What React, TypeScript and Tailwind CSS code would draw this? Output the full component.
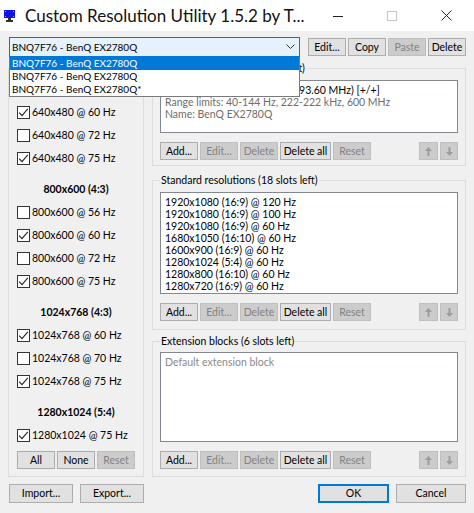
import React from 'react';

type BtnProps = { label: string; w: string; disabled?: boolean; primary?: boolean; h?: string };

const Btn: React.FC<BtnProps> = ({ label, w, disabled, primary, h = 'h-[18px]' }) => (
  <button
    className={`${w} ${h} shrink-0 flex items-center justify-center text-[10.5px] leading-none ${
      disabled
        ? 'bg-[#cccccc] border border-[#bfbfbf] text-[#838383]'
        : primary
        ? 'bg-[#e1e1e1] border-2 border-[#0078d7] text-black'
        : 'bg-[#e1e1e1] border border-[#adadad] text-black'
    }`}
  >
    {label}
  </button>
);

const ArrowBtn: React.FC<{ dir: 'up' | 'down'; w: string }> = ({ dir, w }) => (
  <button className={`${w} h-[18px] shrink-0 flex items-center justify-center border border-[#bfbfbf] bg-[#cccccc]`}>
    <svg width="7" height="9" viewBox="0 0 7 9">
      {dir === 'up' ? (
        <path d="M3.5 0 L7 4 H4.5 V9 H2.5 V4 H0 Z" fill="#9c9c9c" />
      ) : (
        <path d="M3.5 9 L7 5 H4.5 V0 H2.5 V5 H0 Z" fill="#9c9c9c" />
      )}
    </svg>
  </button>
);

const ListButtons = () => (
  <div className="mt-[9px] flex gap-[2px]">
    <Btn label="Add..." w="w-[38px]" />
    <Btn label="Edit..." w="w-[38px]" disabled />
    <Btn label="Delete" w="w-[38px]" disabled />
    <Btn label="Delete all" w="w-[51px]" />
    <Btn label="Reset" w="w-[38px]" disabled />
    <div className="flex-1" />
    <ArrowBtn dir="up" w="w-[19px]" />
    <ArrowBtn dir="down" w="w-[18px]" />
  </div>
);

const Check: React.FC<{ label: string; checked?: boolean }> = ({ label, checked }) => (
  <div className="h-[23px] flex items-center pl-[8px]">
    <span className="w-[13px] h-[13px] shrink-0 border border-[#333333] bg-white flex items-center justify-center">
      {checked && (
        <svg width="11" height="11" viewBox="0 0 11 11">
          <path d="M1.2 5.6 L4 8.6 L9.8 1.8" fill="none" stroke="#222" strokeWidth="1.1" />
        </svg>
      )}
    </span>
    <span className="ml-[2px] whitespace-nowrap">{label}</span>
  </div>
);

const Header: React.FC<{ label: string; first?: boolean }> = ({ label, first }) => (
  <div className={`h-[23px] flex items-center justify-center font-bold ${first ? '' : 'mt-[8px]'}`}>{label}</div>
);

const App: React.FC = () => {
  const standard = [
    '1920x1080 (16:9) @ 120 Hz',
    '1920x1080 (16:9) @ 100 Hz',
    '1920x1080 (16:9) @ 60 Hz',
    '1680x1050 (16:10) @ 60 Hz',
    '1600x900 (16:9) @ 60 Hz',
    '1280x1024 (5:4) @ 60 Hz',
    '1280x800 (16:10) @ 60 Hz',
    '1280x720 (16:9) @ 60 Hz',
  ];

  return (
    <div className="w-[474px] h-[513px] bg-[#f0f0f0] overflow-hidden text-[10.5px] text-black font-['Lato','Liberation_Sans',sans-serif]">
      {/* Title bar */}
      <div className="h-[31px] bg-white flex items-center">
        <svg className="ml-[4px] shrink-0" width="11" height="12" viewBox="0 0 11 12">
          <rect x="0" y="0" width="11" height="8" fill="#1010e8" />
          <rect x="1" y="1" width="1" height="1" fill="#9fb4ff" />
          <rect x="9" y="1" width="1" height="1" fill="#9fb4ff" />
          <rect x="1" y="6" width="1" height="1" fill="#9fb4ff" />
          <rect x="9" y="6" width="1" height="1" fill="#9fb4ff" />
          <rect x="4" y="8" width="3" height="2" fill="#333" />
          <rect x="2" y="10" width="7" height="2" fill="#333" />
        </svg>
        <span className="ml-[10px] text-[17px] text-[#111] whitespace-nowrap">Custom Resolution Utility 1.5.2 by T...</span>
        <div className="ml-auto flex pr-[1px]">
          <div className="w-[54px] h-[31px] flex items-center justify-center">
            <svg width="10" height="10" viewBox="0 0 10 10">
              <path d="M0 5.5 H10" stroke="#222" strokeWidth="1" />
            </svg>
          </div>
          <div className="w-[54px] h-[31px] flex items-center justify-center">
            <svg width="10" height="10" viewBox="0 0 10 10">
              <rect x="0.5" y="0.5" width="9" height="9" fill="none" stroke="#c4c4c4" strokeWidth="1" />
            </svg>
          </div>
          <div className="w-[54px] h-[31px] flex items-center justify-center">
            <svg width="11" height="11" viewBox="0 0 11 11">
              <path d="M0.5 0.5 L10.5 10.5 M10.5 0.5 L0.5 10.5" stroke="#222" strokeWidth="1" />
            </svg>
          </div>
        </div>
      </div>

      <div className="px-[8px] pt-[6px]">
        {/* Display selector row */}
        <div className="h-[20px] flex items-center">
          <div className="relative ml-[1px] w-[291px] h-[20px] shrink-0 text-[10px]">
            <div className="h-full border border-[#0078d7] bg-[#e5f1fb] flex items-center pl-[2px] pr-[4px]">
              <span className="whitespace-nowrap">BNQ7F76 - BenQ EX2780Q</span>
              <svg className="ml-auto" width="9" height="6" viewBox="0 0 9 6">
                <path d="M0.5 0.5 L4.5 4.5 L8.5 0.5" fill="none" stroke="#333" strokeWidth="1" />
              </svg>
            </div>
            <div className="absolute left-0 top-full w-full z-10 bg-white border-x border-b border-[#7a7a7a]">
              <div className="h-[13px] leading-[13px] pl-[2px] bg-[#0078d7] text-white">BNQ7F76 - BenQ EX2780Q</div>
              <div className="h-[13px] leading-[13px] pl-[2px]">BNQ7F76 - BenQ EX2780Q</div>
              <div className="h-[13px] leading-[13px] pl-[2px]">BNQ7F76 - BenQ EX2780Q*</div>
            </div>
          </div>
          <div className="ml-auto flex gap-[2px]">
            <Btn label="Edit..." w="w-[38px]" />
            <Btn label="Copy" w="w-[38px]" />
            <Btn label="Paste" w="w-[38px]" disabled />
            <Btn label="Delete" w="w-[38px]" />
          </div>
        </div>

        {/* Main area */}
        <div className="mt-[5px] flex gap-[8px]">
          <fieldset className="w-[136px] h-[415px] shrink-0 border border-[#dcdcdc] px-0">
            <legend className="ml-[7px] px-[1px] leading-[13px]">Established resolutions</legend>
            <div className="pt-[3px]">
              <Header label="640x480 (4:3)" first />
              <Check label="640x480 @ 60 Hz" checked />
              <Check label="640x480 @ 72 Hz" />
              <Check label="640x480 @ 75 Hz" checked />
              <Header label="800x600 (4:3)" />
              <Check label="800x600 @ 56 Hz" />
              <Check label="800x600 @ 60 Hz" checked />
              <Check label="800x600 @ 72 Hz" />
              <Check label="800x600 @ 75 Hz" checked />
              <Header label="1024x768 (4:3)" />
              <Check label="1024x768 @ 60 Hz" checked />
              <Check label="1024x768 @ 70 Hz" />
              <Check label="1024x768 @ 75 Hz" checked />
              <Header label="1280x1024 (5:4)" />
              <Check label="1280x1024 @ 75 Hz" checked />
              <div className="mt-[4px] pl-[8px] flex gap-[2px]">
                <Btn label="All" w="w-[38px]" />
                <Btn label="None" w="w-[38px]" />
                <Btn label="Reset" w="w-[38px]" disabled />
              </div>
            </div>
          </fieldset>

          <div className="w-[314px] flex flex-col">
            <fieldset className="h-[104px] border border-[#dcdcdc] px-[7px]">
              <legend className="px-[1px] leading-[13px]">Detailed resolutions (1 slot left)</legend>
              <div className="mt-[5px] h-[53px] bg-white border border-[#828790] pt-[3px] px-[4px] leading-[12px] whitespace-nowrap overflow-hidden">
                <div>2560x1440 @ 143.998 Hz (593.60 MHz) [+/+]</div>
                <div className="text-[#6d6d6d]">Range limits: 40-144 Hz, 222-222 kHz, 600 MHz</div>
                <div className="text-[#6d6d6d]">Name: BenQ EX2780Q</div>
              </div>
              <ListButtons />
            </fieldset>

            <fieldset className="mt-[8px] h-[156px] border border-[#dcdcdc] px-[7px]">
              <legend className="px-[1px] leading-[13px]">Standard resolutions (18 slots left)</legend>
              <div className="mt-[5px] h-[102px] bg-white border border-[#828790] pt-[3px] px-[4px] leading-[12px] whitespace-nowrap overflow-hidden">
                {standard.map((s) => (
                  <div key={s}>{s}</div>
                ))}
              </div>
              <ListButtons />
            </fieldset>

            <fieldset className="mt-[5px] h-[142px] border border-[#dcdcdc] px-[7px]">
              <legend className="px-[1px] leading-[13px]">Extension blocks (6 slots left)</legend>
              <div className="mt-[4px] h-[90px] bg-white border border-[#828790] pt-[3px] px-[4px] leading-[12px] whitespace-nowrap overflow-hidden">
                <div className="text-[#8a8a8a]">Default extension block</div>
              </div>
              <ListButtons />
            </fieldset>
          </div>
        </div>

        {/* Bottom buttons */}
        <div className="mt-[7px] h-[19px] flex">
          <Btn label="Import..." w="w-[64px]" h="h-[19px] ml-[1px]" />
          <Btn label="Export..." w="w-[64px]" h="h-[19px] ml-[7px]" />
          <div className="flex-1" />
          <Btn label="OK" w="w-[71px]" h="h-[19px]" primary />
          <Btn label="Cancel" w="w-[70px]" h="h-[19px] ml-[7px]" />
        </div>
      </div>
    </div>
  );
};

export default App;
